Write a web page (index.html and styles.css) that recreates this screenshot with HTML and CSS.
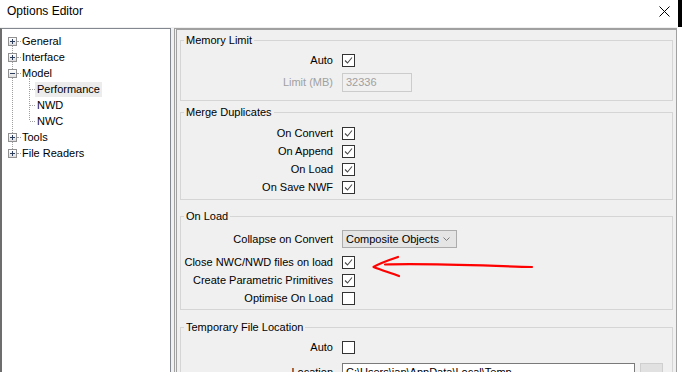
FILE: index.html
```html
<!DOCTYPE html>
<html lang="en">
<head>
    <meta charset="UTF-8">
    <meta name="viewport" content="width=device-width, initial-scale=1.0">
    <title>Options Editor</title>
    <link rel="stylesheet" href="styles.css">
</head>
<body>
    <div class="window">
        <div class="titlebar">
            <span class="title">Options Editor</span>
            <button class="close" aria-label="Close">
                <svg width="11" height="11" viewBox="0 0 11 11"><path d="M0.5 0.5 L10.5 10.5 M10.5 0.5 L0.5 10.5" stroke="#000" stroke-width="1"/></svg>
            </button>
        </div>

        <div class="main">
            <div class="tree-pane">
                <ul class="tree">
                    <li><span class="node"><i class="exp plus"></i>General</span></li>
                    <li><span class="node"><i class="exp plus"></i>Interface</span></li>
                    <li>
                        <span class="node"><i class="exp minus"></i>Model</span>
                        <ul class="children">
                            <li><span class="node leaf"><span class="label selected">Performance</span></span></li>
                            <li><span class="node leaf"><span class="label">NWD</span></span></li>
                            <li><span class="node leaf"><span class="label">NWC</span></span></li>
                        </ul>
                    </li>
                    <li><span class="node"><i class="exp plus"></i>Tools</span></li>
                    <li><span class="node"><i class="exp plus"></i>File Readers</span></li>
                </ul>
            </div>

            <div class="panel">
                <fieldset class="group memory">
                    <legend>Memory Limit</legend>
                    <div class="row">
                        <label>Auto</label>
                        <span class="cb checked"><svg width="11" height="11" viewBox="0 0 11 11"><path d="M2 5.5 L4.5 8 L9 2.5" fill="none" stroke="#4a4a4a" stroke-width="1.1"/></svg></span>
                    </div>
                    <div class="row tall">
                        <label class="disabled">Limit (MB)</label>
                        <span class="input limit disabled">32336</span>
                    </div>
                </fieldset>

                <fieldset class="group merge">
                    <legend>Merge Duplicates</legend>
                    <div class="row">
                        <label>On Convert</label>
                        <span class="cb checked"><svg width="11" height="11" viewBox="0 0 11 11"><path d="M2 5.5 L4.5 8 L9 2.5" fill="none" stroke="#4a4a4a" stroke-width="1.1"/></svg></span>
                    </div>
                    <div class="row">
                        <label>On Append</label>
                        <span class="cb checked"><svg width="11" height="11" viewBox="0 0 11 11"><path d="M2 5.5 L4.5 8 L9 2.5" fill="none" stroke="#4a4a4a" stroke-width="1.1"/></svg></span>
                    </div>
                    <div class="row">
                        <label>On Load</label>
                        <span class="cb checked"><svg width="11" height="11" viewBox="0 0 11 11"><path d="M2 5.5 L4.5 8 L9 2.5" fill="none" stroke="#4a4a4a" stroke-width="1.1"/></svg></span>
                    </div>
                    <div class="row">
                        <label>On Save NWF</label>
                        <span class="cb checked"><svg width="11" height="11" viewBox="0 0 11 11"><path d="M2 5.5 L4.5 8 L9 2.5" fill="none" stroke="#4a4a4a" stroke-width="1.1"/></svg></span>
                    </div>
                </fieldset>

                <fieldset class="group onload">
                    <legend>On Load</legend>
                    <div class="row combo-row">
                        <label>Collapse on Convert</label>
                        <span class="combo">
                            Composite Objects
                            <svg class="chevron" width="7" height="4" viewBox="0 0 7 4"><path d="M0.5 0.5 L3.5 3.5 L6.5 0.5" fill="none" stroke="#7a7a7a" stroke-width="1"/></svg>
                        </span>
                    </div>
                    <div class="row first">
                        <label>Close NWC/NWD files on load</label>
                        <span class="cb checked"><svg width="11" height="11" viewBox="0 0 11 11"><path d="M2 5.5 L4.5 8 L9 2.5" fill="none" stroke="#4a4a4a" stroke-width="1.1"/></svg></span>
                    </div>
                    <div class="row">
                        <label>Create Parametric Primitives</label>
                        <span class="cb checked"><svg width="11" height="11" viewBox="0 0 11 11"><path d="M2 5.5 L4.5 8 L9 2.5" fill="none" stroke="#4a4a4a" stroke-width="1.1"/></svg></span>
                    </div>
                    <div class="row">
                        <label>Optimise On Load</label>
                        <span class="cb"></span>
                    </div>
                </fieldset>

                <fieldset class="group temp">
                    <legend>Temporary File Location</legend>
                    <div class="row">
                        <label>Auto</label>
                        <span class="cb"></span>
                    </div>
                    <div class="row location">
                        <label>Location</label>
                        <span class="path-field">
                            <span class="input path">C:\Users\ian\AppData\Local\Temp</span>
                            <button class="browse"></button>
                        </span>
                    </div>
                </fieldset>
            </div>
        </div>

        <!-- hand drawn annotation on top of the dialog -->
        <svg class="annotation" width="682" height="372" viewBox="0 0 682 372">
            <path d="M532 267 C490 266 430 263 385 264.5" fill="none" stroke="#f00" stroke-width="2.2" stroke-linecap="round"/>
            <path d="M398 257 C389 260 380 263 373.5 267 C381 270 391 273 399 276" fill="none" stroke="#f00" stroke-width="2.2" stroke-linecap="round" stroke-linejoin="round"/>
        </svg>
    </div>
</body>
</html>
```

FILE: styles.css
```css
body {
    margin: 0;
    font-family: "Liberation Sans", Arial, sans-serif;
    font-size: 11px;
    color: #000;
    background-color: #fff;
}

.window {
    position: relative;
    width: 682px;
    height: 372px;
    overflow: hidden;
}

/* title bar */
.titlebar {
    display: flex;
    align-items: flex-start;
    height: 27px;
    box-sizing: border-box;
    border-right: 4px solid #000;
    background-color: #fff;
}

.title {
    font-size: 12px;
    line-height: 15px;
    padding: 4px 0 0 7px;
}

.close {
    margin: 6px 8px 0 auto;
    padding: 0;
    width: 11px;
    height: 11px;
    border: none;
    background: none;
}

.close svg {
    display: block;
}

.main {
    display: flex;
    width: 677px;
    height: 345px;
    background-color: #f0f0f0;
}

/* tree on the left */
.tree-pane {
    width: 171px;
    margin-top: 1px;
    box-sizing: border-box;
    border: 1px solid #828790;
    border-left: 2px solid #6d6d6d;
    border-bottom: none;
    background-color: #fff;
}

.tree {
    position: relative;
    list-style: none;
    margin: 0;
    padding: 4px 0 0 6px;
}

.tree::before {
    content: '';
    position: absolute;
    left: 10px;
    top: 12px;
    height: 112px;
    border-left: 1px dotted #a0a0a0;
}

.tree li {
    list-style: none;
}

.node {
    position: relative;
    display: flex;
    align-items: center;
    height: 16px;
    white-space: nowrap;
}

.exp {
    position: relative;
    z-index: 1;
    width: 9px;
    height: 9px;
    box-sizing: border-box;
    margin-right: 5px;
    border: 1px solid #919191;
    background: linear-gradient(#fff, #dedede);
}

.exp::before {
    content: '';
    position: absolute;
    left: 1px;
    top: 3px;
    width: 5px;
    height: 1px;
    background-color: #2c3e5c;
}

.exp.plus::after {
    content: '';
    position: absolute;
    left: 3px;
    top: 1px;
    width: 1px;
    height: 5px;
    background-color: #2c3e5c;
}

.node .exp + * ,
.exp {
    flex-shrink: 0;
}

.node:not(.leaf)::after {
    content: '';
    position: absolute;
    left: 9px;
    top: 8px;
    width: 4px;
    border-top: 1px dotted #a0a0a0;
}

.children {
    position: relative;
    margin: 0;
    padding: 0 0 0 21px;
}

.children::before {
    content: '';
    position: absolute;
    left: 21px;
    top: -3px;
    height: 42px;
    border-left: 1px dotted #a0a0a0;
}

.leaf {
    padding-left: 6px;
}

.leaf::before {
    content: '';
    position: absolute;
    left: 1px;
    top: 8px;
    width: 5px;
    border-top: 1px dotted #a0a0a0;
}

.label {
    padding: 0 2px;
    line-height: 15px;
}

.label.selected {
    background-color: #ececec;
}

/* options panel */
.panel {
    width: 503px;
    margin: 1px 0 0 3px;
    box-sizing: border-box;
    border-top: 2px solid #a0a0a0;
    border-left: 3px double #a0a0a0;
    border-right: 1px solid #a0a0a0;
    padding: 3px 3px 0 3px;
}

.group {
    margin: 4px 0 0;
    padding: 0;
    min-width: 0;
    border: 1px solid #d5d5d5;
}

.group legend {
    margin-left: 3px;
    padding: 0 2px;
    line-height: 14px;
}

.memory {
    margin-top: 0;
    padding: 4px 0 8px;
}

.merge {
    padding: 5px 0 3px;
}

.onload {
    margin-top: 9px;
    padding: 5px 0 2px;
}

.temp {
    margin-top: 10px;
    padding: 4px 0 0;
}

.row {
    display: grid;
    grid-template-columns: 152px auto;
    column-gap: 9px;
    align-items: center;
    height: 18px;
}

.row label {
    text-align: right;
    white-space: nowrap;
}

.row.tall {
    height: 20px;
    margin-top: 3px;
}

.row.combo-row {
    height: 22px;
}

.row.first {
    margin-top: 3px;
}

.row.location {
    height: 20px;
    margin-top: 6px;
}

.disabled {
    color: #a0a0a0;
}

.cb {
    display: flex;
    align-items: center;
    justify-content: center;
    width: 13px;
    height: 13px;
    box-sizing: border-box;
    border: 1px solid #333;
    background-color: #fff;
}

.input {
    display: block;
    height: 19px;
    box-sizing: border-box;
    padding: 0 3px;
    line-height: 17px;
    white-space: nowrap;
    overflow: hidden;
}

.input.limit {
    width: 70px;
    border: 1px solid #cccccc;
    background-color: #f0f0f0;
}

.combo {
    display: flex;
    align-items: center;
    width: 115px;
    height: 18px;
    box-sizing: border-box;
    padding: 0 0 0 3px;
    border: 1px solid #acacac;
    background-color: #e5e5e5;
}

.chevron {
    margin-left: auto;
    margin-right: 6px;
}

.path-field {
    display: flex;
    gap: 5px;
}

.input.path {
    width: 293px;
    border: 1px solid #7a7a7a;
    background-color: #fff;
}

.browse {
    width: 23px;
    height: 19px;
    padding: 0;
    border: 1px solid #cfcfcf;
    background-color: #e1e1e1;
}

.annotation {
    position: absolute;
    left: 0;
    top: 0;
    pointer-events: none;
}
```
